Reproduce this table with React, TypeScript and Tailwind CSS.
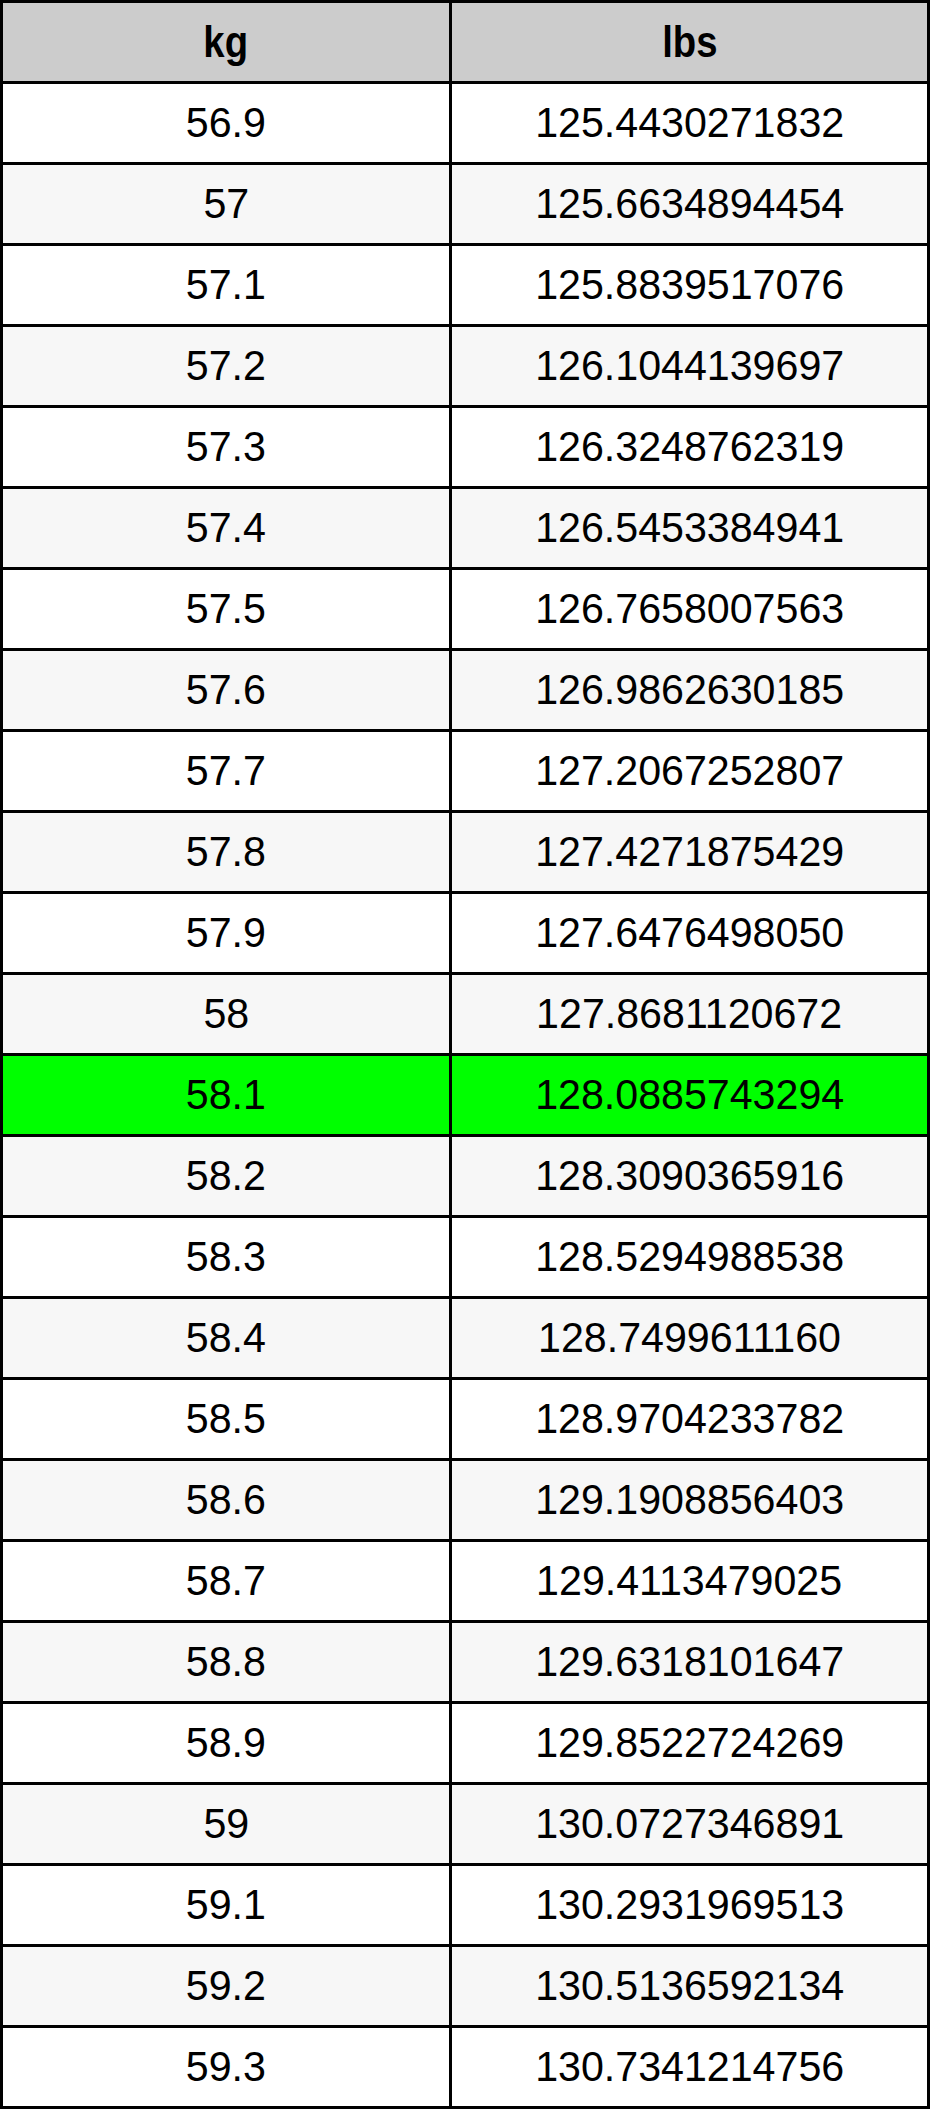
import React from "react";

const rows: [string, string][] = [
  ["56.9", "125.4430271832"],
  ["57", "125.6634894454"],
  ["57.1", "125.8839517076"],
  ["57.2", "126.1044139697"],
  ["57.3", "126.3248762319"],
  ["57.4", "126.5453384941"],
  ["57.5", "126.7658007563"],
  ["57.6", "126.9862630185"],
  ["57.7", "127.2067252807"],
  ["57.8", "127.4271875429"],
  ["57.9", "127.6476498050"],
  ["58", "127.8681120672"],
  ["58.1", "128.0885743294"],
  ["58.2", "128.3090365916"],
  ["58.3", "128.5294988538"],
  ["58.4", "128.7499611160"],
  ["58.5", "128.9704233782"],
  ["58.6", "129.1908856403"],
  ["58.7", "129.4113479025"],
  ["58.8", "129.6318101647"],
  ["58.9", "129.8522724269"],
  ["59", "130.0727346891"],
  ["59.1", "130.2931969513"],
  ["59.2", "130.5136592134"],
  ["59.3", "130.7341214756"],
];

const App = () => {
  return (
    <div
      className="w-[930px] border-l-[3px] border-t-[3px] border-black text-black text-[42px] leading-none"
      style={{ fontFamily: '"Liberation Sans", Arial, sans-serif' }}
    >
      <div className="flex bg-[#cccccc] font-bold text-[44px]">
        <div className="w-[449px] h-[81px] border-r-[3px] border-b-[3px] border-black flex items-center justify-center">
          <span className="inline-block scale-x-[0.87]">kg</span>
        </div>
        <div className="w-[478px] h-[81px] border-r-[3px] border-b-[3px] border-black flex items-center justify-center">
          <span className="inline-block scale-x-[0.87]">lbs</span>
        </div>
      </div>
      {rows.map(([kg, lbs], i) => {
        const bg =
          kg === "58.1" ? "bg-[#00ff00]" : i % 2 === 1 ? "bg-[#f7f7f7]" : "bg-white";
        return (
          <div key={kg} className={`flex ${bg}`}>
            <div className="w-[449px] h-[81px] border-r-[3px] border-b-[3px] border-black flex items-center justify-center">
              <span className="inline-block scale-x-[0.98]">{kg}</span>
            </div>
            <div className="w-[478px] h-[81px] border-r-[3px] border-b-[3px] border-black flex items-center justify-center">
              <span className="inline-block scale-x-[0.98]">{lbs}</span>
            </div>
          </div>
        );
      })}
    </div>
  );
};

export default App;
